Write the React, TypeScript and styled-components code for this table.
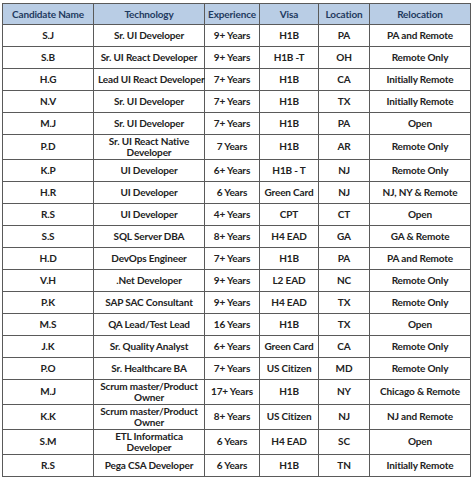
import React from "react";
import styled, { createGlobalStyle } from "styled-components";

const GlobalStyle = createGlobalStyle`
    html, body {
        margin: 0;
        padding: 0;
        background: #ffffff;
    }
`;

type Candidate = {
    name: string;
    tech: string;
    exp: string;
    visa: string;
    location: string;
    relocation: string;
    tall?: boolean;
};

const candidates: Candidate[] = [
    { name: "S.J", tech: "Sr. UI Developer", exp: "9+ Years", visa: "H1B", location: "PA", relocation: "PA and Remote" },
    { name: "S.B", tech: "Sr. UI React Developer", exp: "9+ Years", visa: "H1B -T", location: "OH", relocation: "Remote Only" },
    { name: "H.G", tech: "Lead UI React Developer", exp: "7+ Years", visa: "H1B", location: "CA", relocation: "Initially Remote" },
    { name: "N.V", tech: "Sr. UI Developer", exp: "7+ Years", visa: "H1B", location: "TX", relocation: "Initially Remote" },
    { name: "M.J", tech: "Sr. UI Developer", exp: "7+ Years", visa: "H1B", location: "PA", relocation: "Open" },
    { name: "P.D", tech: "Sr. UI React Native Developer", exp: "7 Years", visa: "H1B", location: "AR", relocation: "Remote Only", tall: true },
    { name: "K.P", tech: "UI Developer", exp: "6+ Years", visa: "H1B - T", location: "NJ", relocation: "Remote Only" },
    { name: "H.R", tech: "UI Developer", exp: "6 Years", visa: "Green Card", location: "NJ", relocation: "NJ, NY & Remote" },
    { name: "R.S", tech: "UI Developer", exp: "4+ Years", visa: "CPT", location: "CT", relocation: "Open" },
    { name: "S.S", tech: "SQL Server DBA", exp: "8+ Years", visa: "H4 EAD", location: "GA", relocation: "GA & Remote" },
    { name: "H.D", tech: "DevOps Engineer", exp: "7+ Years", visa: "H1B", location: "PA", relocation: "PA and Remote" },
    { name: "V.H", tech: ".Net Developer", exp: "9+ Years", visa: "L2 EAD", location: "NC", relocation: "Remote Only" },
    { name: "P.K", tech: "SAP SAC Consultant", exp: "9+ Years", visa: "H4 EAD", location: "TX", relocation: "Remote Only" },
    { name: "M.S", tech: "QA Lead/Test Lead", exp: "16 Years", visa: "H1B", location: "TX", relocation: "Open" },
    { name: "J.K", tech: "Sr. Quality Analyst", exp: "6+ Years", visa: "Green Card", location: "CA", relocation: "Remote Only" },
    { name: "P.O", tech: "Sr. Healthcare BA", exp: "7+ Years", visa: "US Citizen", location: "MD", relocation: "Remote Only" },
    { name: "M.J", tech: "Scrum master/Product Owner", exp: "17+ Years", visa: "H1B", location: "NY", relocation: "Chicago & Remote", tall: true },
    { name: "K.K", tech: "Scrum master/Product Owner", exp: "8+ Years", visa: "US Citizen", location: "NJ", relocation: "NJ and Remote", tall: true },
    { name: "S.M", tech: "ETL Informatica Developer", exp: "6 Years", visa: "H4 EAD", location: "SC", relocation: "Open", tall: true },
    { name: "R.S", tech: "Pega CSA Developer", exp: "6 Years", visa: "H1B", location: "TN", relocation: "Initially Remote" },
];

const columns = [
    { label: "Candidate Name", width: 91 },
    { label: "Technology", width: 111 },
    { label: "Experience", width: 55 },
    { label: "Visa", width: 59 },
    { label: "Location", width: 51 },
    { label: "Relocation", width: 101 },
];

const Page = styled.div`
    padding: 3px 0 0 2px;
    font-family: "Lato", "Liberation Sans", sans-serif;
`;

const Table = styled.table`
    border-collapse: collapse;
    table-layout: fixed;
    width: 468px;
`;

const HeadRow = styled.tr`
    height: 21px;
    background: #b9cde5;
`;

const HeadCell = styled.th`
    border: 1px solid #5a5a5a;
    padding: 0 1px;
    font-size: 10px;
    font-weight: 700;
    letter-spacing: -0.15px;
    color: #1f3a60;
    text-align: center;
    white-space: nowrap;
`;

const Row = styled.tr<{ $tall: boolean }>`
    height: ${(p) => (p.$tall ? "25px" : "22px")};
`;

const Cell = styled.td<{ $wrap?: boolean }>`
    border: 1px solid #5a5a5a;
    padding: 0 4px;
    font-size: 10px;
    line-height: 11.5px;
    font-weight: 700;
    letter-spacing: -0.15px;
    color: #222222;
    text-align: center;
    white-space: ${(p) => (p.$wrap ? "normal" : "nowrap")};
`;

const App = () => {
    return (
        <>
            <GlobalStyle />
            <Page>
                <Table>
                    <colgroup>
                        {columns.map((c) => (
                            <col key={c.label} style={{ width: c.width }} />
                        ))}
                    </colgroup>
                    <thead>
                        <HeadRow>
                            {columns.map((c) => (
                                <HeadCell key={c.label}>{c.label}</HeadCell>
                            ))}
                        </HeadRow>
                    </thead>
                    <tbody>
                        {candidates.map((c, i) => (
                            <Row key={i} $tall={!!c.tall}>
                                <Cell>{c.name}</Cell>
                                <Cell $wrap={c.tall}>{c.tech}</Cell>
                                <Cell>{c.exp}</Cell>
                                <Cell>{c.visa}</Cell>
                                <Cell>{c.location}</Cell>
                                <Cell>{c.relocation}</Cell>
                            </Row>
                        ))}
                    </tbody>
                </Table>
            </Page>
        </>
    );
};

export default App;
